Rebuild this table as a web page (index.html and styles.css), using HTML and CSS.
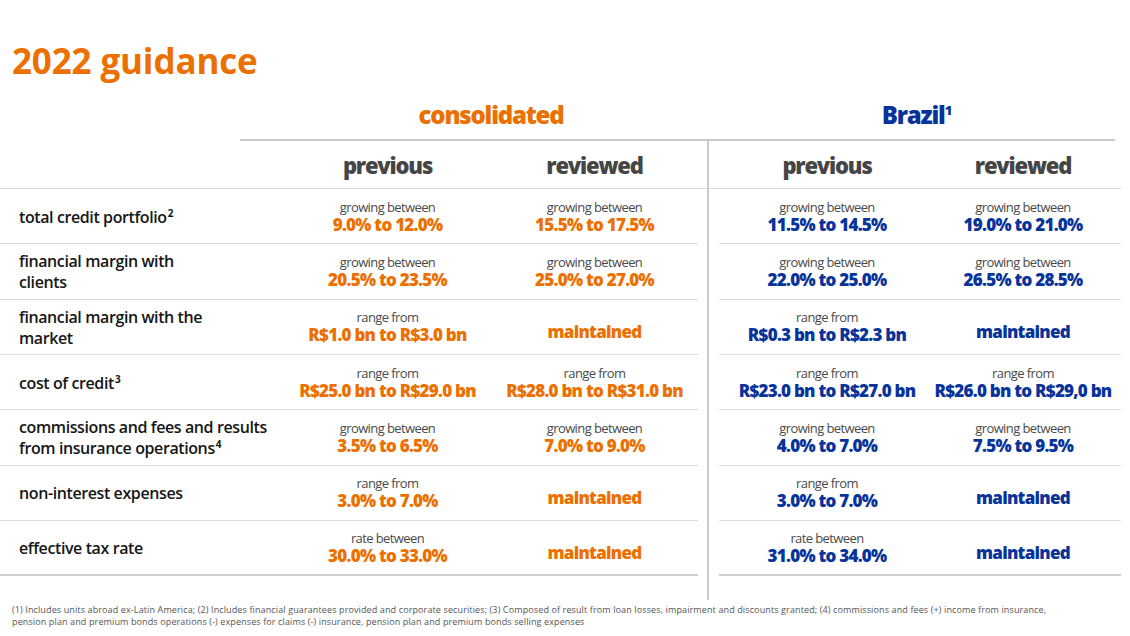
FILE: index.html
```html
<!DOCTYPE html>
<html lang="en">
<head>
<meta charset="utf-8">
<title>2022 guidance</title>
<link rel="stylesheet" href="styles.css">
</head>
<body>
<div class="sheet">
  <h1 class="title">2022 guidance</h1>
  <div class="tables">
    <section class="panel panel-cons">
      <div class="group group-cons"><span class="group-name orange">consolidated</span></div>
      <div class="body">
        <div class="row head">
          <div class="label"></div>
          <div class="cell"><span class="colhead">previous</span></div>
          <div class="cell"><span class="colhead">reviewed</span></div>
        </div>
        <div class="row data">
          <div class="label">total credit portfolio<sup class="fn">2</sup></div>
          <div class="cell"><span class="kind">growing between</span><span class="val orange">9.0% to 12.0%</span></div>
          <div class="cell"><span class="kind">growing between</span><span class="val orange">15.5% to 17.5%</span></div>
        </div>
        <div class="row data">
          <div class="label">financial margin with<br>clients</div>
          <div class="cell"><span class="kind">growing between</span><span class="val orange">20.5% to 23.5%</span></div>
          <div class="cell"><span class="kind">growing between</span><span class="val orange">25.0% to 27.0%</span></div>
        </div>
        <div class="row data">
          <div class="label">financial margin with the<br>market</div>
          <div class="cell"><span class="kind">range from</span><span class="val orange">R$1.0 bn to R$3.0 bn</span></div>
          <div class="cell single"><span class="val orange">maintained</span></div>
        </div>
        <div class="row data">
          <div class="label">cost of credit<sup class="fn">3</sup></div>
          <div class="cell"><span class="kind">range from</span><span class="val orange">R$25.0 bn to R$29.0 bn</span></div>
          <div class="cell"><span class="kind">range from</span><span class="val orange">R$28.0 bn to R$31.0 bn</span></div>
        </div>
        <div class="row data">
          <div class="label">commissions and fees and results<br>from insurance operations<sup class="fn">4</sup></div>
          <div class="cell"><span class="kind">growing between</span><span class="val orange">3.5% to 6.5%</span></div>
          <div class="cell"><span class="kind">growing between</span><span class="val orange">7.0% to 9.0%</span></div>
        </div>
        <div class="row data">
          <div class="label">non-interest expenses</div>
          <div class="cell"><span class="kind">range from</span><span class="val orange">3.0% to 7.0%</span></div>
          <div class="cell single"><span class="val orange">maintained</span></div>
        </div>
        <div class="row data last">
          <div class="label">effective tax rate</div>
          <div class="cell"><span class="kind">rate between</span><span class="val orange">30.0% to 33.0%</span></div>
          <div class="cell single"><span class="val orange">maintained</span></div>
        </div>
      </div>
    </section>

    <section class="panel panel-br">
      <div class="group group-br"><span class="group-name blue">Brazil<sup class="gsup">1</sup></span></div>
      <div class="body">
        <div class="row head">
          <div class="cell"><span class="colhead">previous</span></div>
          <div class="cell"><span class="colhead">reviewed</span></div>
        </div>
        <div class="row data">
          <div class="cell"><span class="kind">growing between</span><span class="val blue">11.5% to 14.5%</span></div>
          <div class="cell"><span class="kind">growing between</span><span class="val blue">19.0% to 21.0%</span></div>
        </div>
        <div class="row data">
          <div class="cell"><span class="kind">growing between</span><span class="val blue">22.0% to 25.0%</span></div>
          <div class="cell"><span class="kind">growing between</span><span class="val blue">26.5% to 28.5%</span></div>
        </div>
        <div class="row data">
          <div class="cell"><span class="kind">range from</span><span class="val blue">R$0.3 bn to R$2.3 bn</span></div>
          <div class="cell single"><span class="val blue">maintained</span></div>
        </div>
        <div class="row data">
          <div class="cell"><span class="kind">range from</span><span class="val blue">R$23.0 bn to R$27.0 bn</span></div>
          <div class="cell"><span class="kind">range from</span><span class="val blue">R$26.0 bn to R$29,0 bn</span></div>
        </div>
        <div class="row data">
          <div class="cell"><span class="kind">growing between</span><span class="val blue">4.0% to 7.0%</span></div>
          <div class="cell"><span class="kind">growing between</span><span class="val blue">7.5% to 9.5%</span></div>
        </div>
        <div class="row data">
          <div class="cell"><span class="kind">range from</span><span class="val blue">3.0% to 7.0%</span></div>
          <div class="cell single"><span class="val blue">maintained</span></div>
        </div>
        <div class="row data last">
          <div class="cell"><span class="kind">rate between</span><span class="val blue">31.0% to 34.0%</span></div>
          <div class="cell single"><span class="val blue">maintained</span></div>
        </div>
      </div>
    </section>
  </div>
  <p class="notes">(1) Includes units abroad ex-Latin America; (2) Includes financial guarantees provided and corporate securities; (3) Composed of result from loan losses, impairment and discounts granted; (4) commissions and fees (+) income from insurance,<br>pension plan and premium bonds operations (-) expenses for claims (-) insurance, pension plan and premium bonds selling expenses</p>
</div>
</body>
</html>
```
FILE: styles.css
```css
* { box-sizing: border-box; }

html, body {
  margin: 0;
  padding: 0;
  background: #ffffff;
}

body {
  font-family: "Open Sans", "Noto Sans", "Liberation Sans", sans-serif;
  color: #1c1c1c;
}

.sheet {
  width: 1130px;
  height: 636px;
  overflow: hidden;
}

.orange { color: #ec7000; }
.blue { color: #07339a; }

.title {
  margin: 0;
  padding: 41px 0 0 12px;
  height: 78px;
  font-size: 35px;
  line-height: 40px;
  font-weight: 700;
  color: #ec7000;
  letter-spacing: -0.15px;
}

.tables {
  display: flex;
}

.panel-cons { width: 707px; }
.panel-br { width: 414px; }

.group {
  height: 63px;
  display: flex;
  align-items: flex-end;
  justify-content: center;
  padding-bottom: 10px;
  border-bottom: 2px solid #c9c9c9;
}

.group-cons {
  margin-left: 240px;
  padding-left: 44px;
  padding-right: 9px;
}

.group-br {
  width: 408px;
  padding-left: 12px;
}

.group-name {
  font-size: 24px;
  line-height: 28px;
  font-weight: 800;
  letter-spacing: -1.2px;
}

.gsup {
  font-size: 13px;
  line-height: 0;
  letter-spacing: 0;
  vertical-align: 0;
  position: relative;
  top: -9px;
  margin-left: 0;
}

.panel-br .body {
  border-left: 2px solid #c9c9c9;
  padding-bottom: 24px;
}

.panel-cons .body {
  padding-bottom: 24px;
}

.row {
  display: grid;
}

.panel-cons .row { grid-template-columns: 284px 207px 207px; }
.panel-br .row { grid-template-columns: 206px 196px; }

.row.head {
  height: 48px;
  border-bottom: 1px solid #d9d9d9;
  align-items: center;
  padding-bottom: 1px;
}

.panel-cons .row.head { padding-right: 9px; }
.panel-br .row.head { padding-left: 10px; }

.panel-cons .row.data { width: 698px; }
.panel-br .row.data { margin-left: 10px; width: 402px; }

.row.data {
  height: 55.33px;
  border-bottom: 1px solid #dcdcdc;
  align-items: center;
}

.row.data.last {
  border-bottom: 2px solid #cfcfcf;
}

.panel-br .row .cell:first-child { padding-left: 10px; }

.colhead {
  font-size: 22px;
  line-height: 26px;
  font-weight: 800;
  color: #454545;
  letter-spacing: -1.2px;
}

.label {
  padding-left: 19px;
  padding-top: 2px;
  font-size: 16px;
  line-height: 21px;
  font-weight: 600;
  color: #161616;
  letter-spacing: -0.4px;
  white-space: nowrap;
}

.fn {
  font-size: 10px;
  line-height: 0;
  font-weight: 700;
  vertical-align: 0;
  position: relative;
  top: -6px;
  margin-left: 1px;
}

.cell {
  display: flex;
  flex-direction: column;
  align-items: center;
  justify-content: center;
  text-align: center;
  white-space: nowrap;
  padding-top: 1px;
}

.cell.single {
  padding-top: 10px;
}

.kind {
  font-size: 13px;
  line-height: 16px;
  color: #4a4a4a;
  letter-spacing: -0.6px;
}

.val {
  font-size: 17px;
  line-height: 20px;
  font-weight: 800;
  letter-spacing: -0.75px;
}

.notes {
  margin: 4px 0 0 12px;
  font-size: 9px;
  line-height: 12px;
  color: #555555;
  letter-spacing: 0.12px;
  white-space: nowrap;
}
```
